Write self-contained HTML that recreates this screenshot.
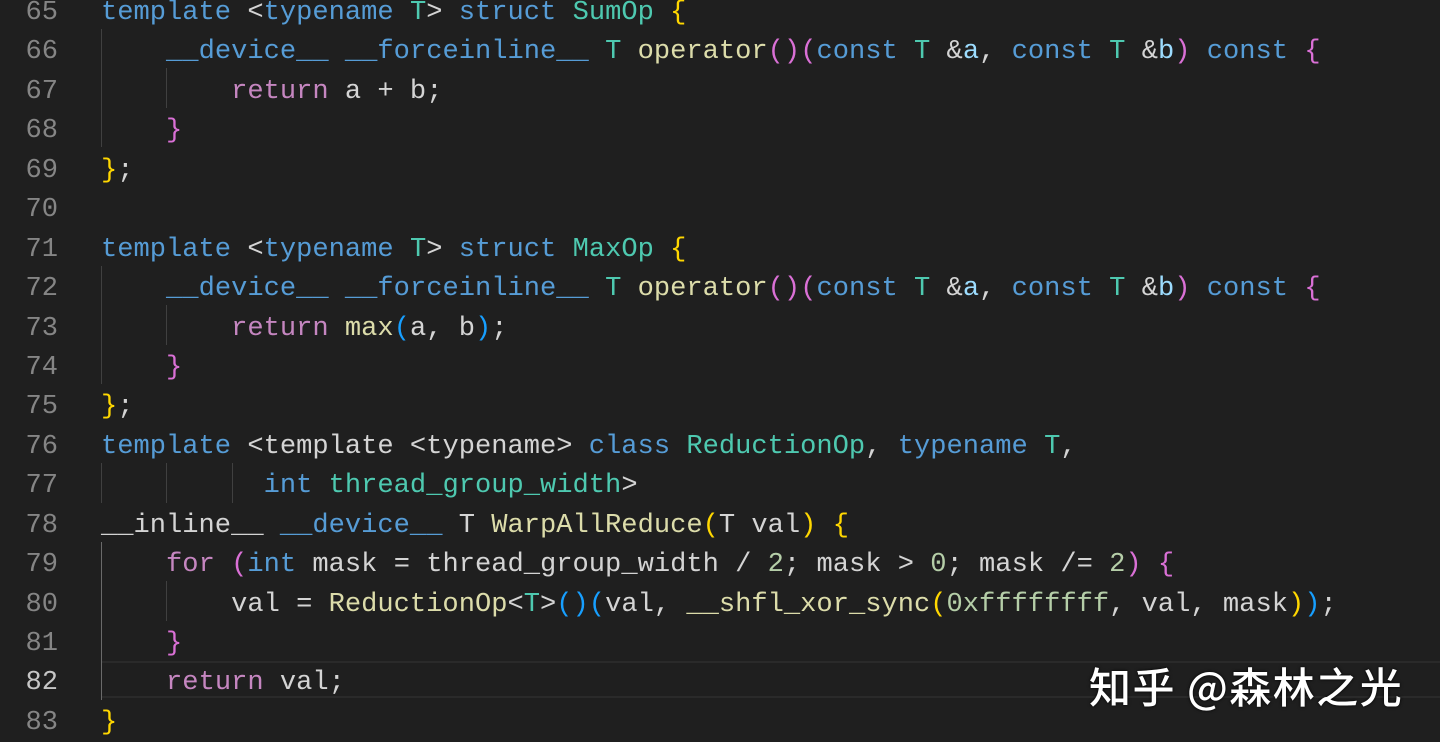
<!DOCTYPE html>
<html><head><meta charset="utf-8"><style>
html,body{margin:0;padding:0;background:#1f1f1f;width:1440px;height:742px;overflow:hidden;position:relative}
.l{position:absolute;left:0;height:39.44px;line-height:39.44px;font-family:"Liberation Mono","DejaVu Sans Mono",monospace;font-size:27.1px;color:#d4d4d4;white-space:pre;width:1440px}
.n{position:absolute;left:0;width:58px;text-align:right;color:#858585}
.c{position:absolute;left:101px}
.k{color:#569cd6}.p{color:#c586c0}.t{color:#4ec9b0}.f{color:#dcdcaa}.v{color:#9cdcfe}.num{color:#b5cea8}
.g{color:#ffd700}.m{color:#da70d6}.b{color:#179fff}
.ig{position:absolute;width:1px;background:#404040}
.cur{position:absolute;left:101px;top:661px;width:1339px;height:37px;border-top:2px solid #2a2a2a;border-bottom:2px solid #2a2a2a;box-sizing:border-box}
.wm{position:absolute;left:1089px;top:655px;font-family:"Noto Sans CJK SC",sans-serif;font-size:42px;letter-spacing:1.5px;color:#fff;font-weight:500;text-shadow:0 0 3px #000}
</style></head><body>
<div class="cur"></div>
<div class="ig" style="left:101px;top:29px;height:118px"></div>
<div class="ig" style="left:166px;top:68px;height:40px"></div>
<div class="ig" style="left:101px;top:266px;height:118px"></div>
<div class="ig" style="left:166px;top:305px;height:40px"></div>
<div class="ig" style="left:101px;top:463px;height:40px"></div>
<div class="ig" style="left:166px;top:463px;height:40px"></div>
<div class="ig" style="left:232px;top:463px;height:40px"></div>
<div class="ig" style="left:101px;top:542px;height:158px;background:#6a6a6a"></div>
<div class="ig" style="left:166px;top:581px;height:40px"></div>

<div class="l" style="top:-7px"><span class="n">65</span><span class="c"><span class="k">template</span> &lt;<span class="k">typename</span> <span class="t">T</span>&gt; <span class="k">struct</span> <span class="t">SumOp</span> <span class="g">{</span></span></div>
<div class="l" style="top:32.44px"><span class="n">66</span><span class="c">    <span class="k">__device__</span> <span class="k">__forceinline__</span> <span class="t">T</span> <span class="f">operator</span><span class="m">()(</span><span class="k">const</span> <span class="t">T</span> &amp;<span class="v">a</span>, <span class="k">const</span> <span class="t">T</span> &amp;<span class="v">b</span><span class="m">)</span> <span class="k">const</span> <span class="m">{</span></span></div>
<div class="l" style="top:71.88px"><span class="n">67</span><span class="c">        <span class="p">return</span> a + b;</span></div>
<div class="l" style="top:111.32px"><span class="n">68</span><span class="c">    <span class="m">}</span></span></div>
<div class="l" style="top:150.76px"><span class="n">69</span><span class="c"><span class="g">}</span>;</span></div>
<div class="l" style="top:190.2px"><span class="n">70</span></div>
<div class="l" style="top:229.64px"><span class="n">71</span><span class="c"><span class="k">template</span> &lt;<span class="k">typename</span> <span class="t">T</span>&gt; <span class="k">struct</span> <span class="t">MaxOp</span> <span class="g">{</span></span></div>
<div class="l" style="top:269.08px"><span class="n">72</span><span class="c">    <span class="k">__device__</span> <span class="k">__forceinline__</span> <span class="t">T</span> <span class="f">operator</span><span class="m">()(</span><span class="k">const</span> <span class="t">T</span> &amp;<span class="v">a</span>, <span class="k">const</span> <span class="t">T</span> &amp;<span class="v">b</span><span class="m">)</span> <span class="k">const</span> <span class="m">{</span></span></div>
<div class="l" style="top:308.52px"><span class="n">73</span><span class="c">        <span class="p">return</span> <span class="f">max</span><span class="b">(</span>a, b<span class="b">)</span>;</span></div>
<div class="l" style="top:347.96px"><span class="n">74</span><span class="c">    <span class="m">}</span></span></div>
<div class="l" style="top:387.4px"><span class="n">75</span><span class="c"><span class="g">}</span>;</span></div>
<div class="l" style="top:426.84px"><span class="n">76</span><span class="c"><span class="k">template</span> &lt;template &lt;typename&gt; <span class="k">class</span> <span class="t">ReductionOp</span>, <span class="k">typename</span> <span class="t">T</span>,</span></div>
<div class="l" style="top:466.28px"><span class="n">77</span><span class="c">          <span class="k">int</span> <span class="t">thread_group_width</span>&gt;</span></div>
<div class="l" style="top:505.72px"><span class="n">78</span><span class="c">__inline__ <span class="k">__device__</span> T <span class="f">WarpAllReduce</span><span class="g">(</span>T val<span class="g">)</span> <span class="g">{</span></span></div>
<div class="l" style="top:545.16px"><span class="n">79</span><span class="c">    <span class="p">for</span> <span class="m">(</span><span class="k">int</span> mask = thread_group_width / <span class="num">2</span>; mask &gt; <span class="num">0</span>; mask /= <span class="num">2</span><span class="m">)</span> <span class="m">{</span></span></div>
<div class="l" style="top:584.6px"><span class="n">80</span><span class="c">        val = <span class="f">ReductionOp</span>&lt;<span class="t">T</span>&gt;<span class="b">()(</span>val, <span class="f">__shfl_xor_sync</span><span class="g">(</span><span class="num">0xffffffff</span>, val, mask<span class="g">)</span><span class="b">)</span>;</span></div>
<div class="l" style="top:624.04px"><span class="n">81</span><span class="c">    <span class="m">}</span></span></div>
<div class="l" style="top:663.48px"><span class="n" style="color:#c6c6c6">82</span><span class="c">    <span class="p">return</span> val;</span></div>
<div class="l" style="top:702.92px"><span class="n">83</span><span class="c"><span class="g">}</span></span></div>
<div class="wm">知乎 @森林之光</div>
</body></html>
